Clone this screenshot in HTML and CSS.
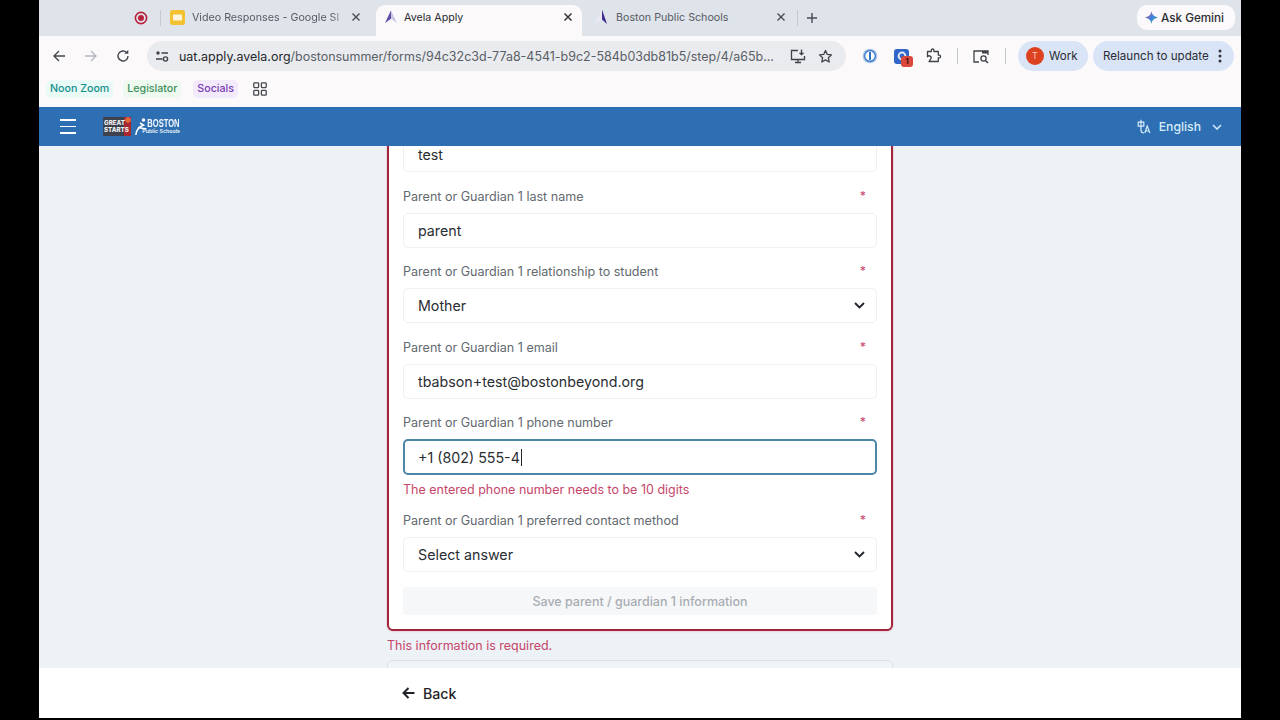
FILE: index.html
```html
<!DOCTYPE html>
<html lang="en">
<head>
<meta charset="utf-8">
<title>Avela Apply</title>
<link rel="stylesheet" href="styles.css">
</head>
<body>
<div class="window">
  <div class="tabstrip">
    <svg class="rec" width="14" height="14" viewBox="0 0 14 14"><circle cx="7" cy="7" r="5.6" fill="none" stroke="#b8213a" stroke-width="1.6"/><circle cx="7" cy="7" r="3" fill="#b8213a"/></svg>
    <span class="vsep rec-sep"></span>
    <div class="tab tab-slides">
      <svg class="fav" width="15" height="15" viewBox="0 0 15 15"><rect width="15" height="15" rx="2.5" fill="#f2c230"/><rect x="3" y="4.5" width="9" height="6" rx=".6" fill="#fdf6dd"/></svg>
      <span class="tab-title fade">Video Responses - Google Sl</span>
      <svg class="tab-x" width="10" height="10" viewBox="0 0 10 10"><path d="M1.5 1.5l7 7M8.5 1.5l-7 7" stroke="#474c55" stroke-width="1.4"/></svg>
    </div>
    <div class="tab tab-active">
      <svg class="fav" width="14" height="14" viewBox="0 0 14 14"><path d="M7 .5L1 13l6-4.200z" fill="#5b4aa8"/><path d="M7 .5L13 13 7 8.800z" fill="#c9c7e4"/></svg>
      <span class="tab-title dark">Avela Apply</span>
      <svg class="tab-x" width="10" height="10" viewBox="0 0 10 10"><path d="M1.5 1.5l7 7M8.5 1.5l-7 7" stroke="#33363c" stroke-width="1.5"/></svg>
    </div>
    <div class="tab tab-boston">
      <svg class="fav" width="16" height="16" viewBox="0 0 16 16"><path d="M9 .5L1.500 15 9 10.500z" fill="#e9e7f3"/><path d="M9 .5L14 15 9 10.500z" fill="#3d2a8c"/></svg>
      <span class="tab-title wide">Boston Public Schools</span>
      <svg class="tab-x" width="10" height="10" viewBox="0 0 10 10"><path d="M1.5 1.5l7 7M8.5 1.5l-7 7" stroke="#474c55" stroke-width="1.4"/></svg>
    </div>
    <span class="vsep"></span>
    <svg class="plus" width="10" height="10" viewBox="0 0 10 10"><path d="M5 0v10M0 5h10" stroke="#474c55" stroke-width="1.4"/></svg>
    <div class="gemini">
      <svg width="13" height="13" viewBox="0 0 14 14"><defs><linearGradient id="gem" x1="0" y1="0" x2="1" y2="1"><stop offset="0" stop-color="#e8593f"/><stop offset=".5" stop-color="#3f7fe8"/><stop offset="1" stop-color="#3fb56a"/></linearGradient></defs><path d="M7 0c.6 3.900 2.600 6 7 7-4.400 1-6.400 3.100-7 7-.6-3.900-2.600-6-7-7 4.400-1 6.400-3.100 7-7z" fill="url(#gem)"/></svg>
      <span>Ask Gemini</span>
    </div>
  </div>

  <div class="toolbar">
    <svg class="nav nav-back" width="14" height="14" viewBox="0 0 14 14"><path d="M13 7H2M7 2L2 7l5 5" fill="none" stroke="#44474d" stroke-width="1.4"/></svg>
    <svg class="nav nav-fwd" width="14" height="14" viewBox="0 0 14 14"><path d="M1 7h11M7 2l5 5-5 5" fill="none" stroke="#b4b7bd" stroke-width="1.4"/></svg>
    <svg class="nav nav-reload" width="14" height="14" viewBox="0 0 14 14"><path d="M12 7a5 5 0 1 1-1.500-3.600" fill="none" stroke="#44474d" stroke-width="1.400"/><path d="M12.300 .8v4h-4z" fill="#44474d"/></svg>
    <div class="omnibox">
      <span class="tune"><svg width="14" height="12" viewBox="0 0 14 12"><circle cx="3" cy="3" r="1.700" fill="#3f4248"/><path d="M6.500 3H13M1 9h6.500" stroke="#3f4248" stroke-width="1.500"/><circle cx="10.500" cy="9" r="2.100" fill="none" stroke="#3f4248" stroke-width="1.400"/></svg></span>
      <span class="url"><span class="host">uat.apply.avela.org</span>/bostonsummer/forms/94c32c3d-77a8-4541-b9c2-584b03db81b5/step/4/a65b...</span>
      <svg class="omni-ico install" width="16" height="15" viewBox="0 0 16 15"><path d="M8 1.500H1.500v9h13V7M5 13.500h6M8 10.500v3" fill="none" stroke="#3f4248" stroke-width="1.300"/><path d="M11.500 .5v5M9.500 3.700l2 2 2-2" fill="none" stroke="#3f4248" stroke-width="1.300"/></svg>
      <svg class="omni-ico star" width="15" height="15" viewBox="0 0 15 15"><path d="M7.500 1.500l1.800 3.900 4.200.5-3.100 2.900.8 4.200-3.700-2.100-3.700 2.100.8-4.200L1.500 5.900l4.200-.5z" fill="none" stroke="#3f4248" stroke-width="1.300" stroke-linejoin="round"/></svg>
    </div>
    <svg class="ext ext-1p" width="16" height="16" viewBox="0 0 16 16"><circle cx="8" cy="8" r="7.300" fill="#9fc3ea"/><circle cx="8" cy="8" r="5.300" fill="#fff" stroke="#2f6fc4" stroke-width="1.200"/><rect x="7" y="3.800" width="2" height="8.400" rx=".8" fill="#2f6fc4"/></svg>
    <div class="ext ext-gear">
      <svg width="15" height="15" viewBox="0 0 15 15"><rect width="15" height="15" rx="3" fill="#2f66c8"/><circle cx="8" cy="7" r="3.400" fill="none" stroke="#dfe9fa" stroke-width="2"/></svg>
      <span class="badge">1</span>
    </div>
    <svg class="ext ext-puzzle" width="16" height="16" viewBox="0 0 16 16"><path d="M1.500 3.500h3.800V2.300a1.300 1.300 0 0 1 2.600 0v1.200h4.400v3.700h1a1.300 1.300 0 0 1 0 2.600h-1v3.700H3l1.800-2.700a1.900 1.900 0 0 0-3.300-2z" fill="none" stroke="#3f4248" stroke-width="1.300" stroke-linejoin="round"/></svg>
    <span class="vsep tool-sep-a"></span>
    <svg class="ext ext-read" width="16" height="15" viewBox="0 0 16 15"><path d="M6 13H1V2h14v4" fill="none" stroke="#3f4248" stroke-width="1.300"/><rect x="9" y="2" width="6" height="2.500" fill="#3f4248"/><circle cx="10.500" cy="9.500" r="2.600" fill="none" stroke="#3f4248" stroke-width="1.300"/><path d="M12.500 11.500l2.500 2.500" stroke="#3f4248" stroke-width="1.500"/></svg>
    <span class="vsep tool-sep-b"></span>
    <div class="pill pill-work"><span class="avatar">T</span><span>Work</span></div>
    <div class="pill pill-relaunch"><span>Relaunch to update</span><svg width="4" height="14" viewBox="0 0 4 14"><circle cx="2" cy="2" r="1.500" fill="#33363c"/><circle cx="2" cy="7" r="1.500" fill="#33363c"/><circle cx="2" cy="12" r="1.500" fill="#33363c"/></svg></div>
  </div>

  <div class="bookmarks">
    <span class="chip chip-teal">Noon Zoom</span>
    <span class="chip chip-green">Legislator</span>
    <span class="chip chip-purple">Socials</span>
    <svg class="apps" width="14" height="14" viewBox="0 0 14 14"><g fill="none" stroke="#44474d" stroke-width="1.300"><rect x=".8" y=".8" width="4.800" height="4.800" rx=".8"/><rect x="8.400" y=".8" width="4.800" height="4.800" rx=".8"/><rect x=".8" y="8.400" width="4.800" height="4.800" rx=".8"/><rect x="8.400" y="8.400" width="4.800" height="4.800" rx=".8"/></g></svg>
  </div>

  <header class="appbar">
    <div class="burger"><i></i><i></i><i></i></div>
    <div class="logo">
      <div class="great"><span>GREAT</span><span>STARTS</span></div>
      <svg class="runner" width="12" height="17" viewBox="0 0 12 17"><circle cx="8.500" cy="2" r="1.700" fill="#fff"/><path d="M.8 17c.4-5 2.500-8 7.700-10L5 5M3 9.500l8.500 1.500" fill="none" stroke="#fff" stroke-width="1.500"/></svg>
      <div class="bps"><span class="bps-a">BOSTON</span><span class="bps-b">Public Schools</span></div>
    </div>
    <div class="lang">
      <svg width="14" height="16" viewBox="0 0 14 16"><g fill="none" stroke="#d6ecfa" stroke-width="1.200"><path d="M4 .8v2.400M1.200 3.200h5.600v4H1.200zM4 3.200v8M4 11c0 2 1 3 3 3"/><path d="M7.800 14l2.400-7 2.600 7M8.700 12h3.200"/></g></svg>
      <span>English</span>
      <svg class="lang-chev" width="10" height="6" viewBox="0 0 10 6"><path d="M1 1l4 4 4-4" fill="none" stroke="#d6ecfa" stroke-width="1.500"/></svg>
    </div>
  </header>

  <main class="content">
    <section class="card">
      <div class="field first"><div class="control"><span>test</span></div></div>
      <div class="field">
        <div class="label"><span>Parent or Guardian 1 last name</span><b>*</b></div>
        <div class="control"><span>parent</span></div>
      </div>
      <div class="field">
        <div class="label"><span>Parent or Guardian 1 relationship to student</span><b>*</b></div>
        <div class="control"><span>Mother</span><svg class="chev" width="11" height="7" viewBox="0 0 11 7"><path d="M1 1l4.500 4.500L10 1" fill="none" stroke="#1f2328" stroke-width="1.800"/></svg></div>
      </div>
      <div class="field">
        <div class="label"><span>Parent or Guardian 1 email</span><b>*</b></div>
        <div class="control"><span>tbabson+test@bostonbeyond.org</span></div>
      </div>
      <div class="field">
        <div class="label"><span>Parent or Guardian 1 phone number</span><b>*</b></div>
        <div class="control focus"><span class="typed">+1 (802) 555-4</span></div>
        <div class="error inner">The entered phone number needs to be 10 digits</div>
      </div>
      <div class="field">
        <div class="label"><span>Parent or Guardian 1 preferred contact method</span><b>*</b></div>
        <div class="control"><span>Select answer</span><svg class="chev" width="11" height="7" viewBox="0 0 11 7"><path d="M1 1l4.500 4.500L10 1" fill="none" stroke="#1f2328" stroke-width="1.800"/></svg></div>
      </div>
      <div class="save">Save parent / guardian 1 information</div>
    </section>
    <div class="error outer">This information is required.</div>
    <div class="next-card"></div>
  </main>

  <footer class="footer">
    <div class="back">
      <svg width="13" height="12" viewBox="0 0 13 12"><path d="M12.500 6H2M6.500 1L1.500 6l5 5" fill="none" stroke="#1f2328" stroke-width="2"/></svg>
      <span>Back</span>
    </div>
  </footer>
</div>
</body>
</html>
```
FILE: styles.css
```css
* { box-sizing: border-box; }
html, body { margin: 0; height: 100%; background: #000; }
body { font-family: Inter, "Liberation Sans", sans-serif; overflow: hidden; }
.window { width: 1202px; height: 718px; margin: 0 auto; display: flex; flex-direction: column; background: #fff; }

/* tab strip */
.tabstrip { height: 36px; flex: none; background: #dfe3ea; display: flex; align-items: center; padding-bottom: 1px; font-size: 10.7px; color: #565b64; }
.rec { margin-left: 95px; flex: none; }
.vsep { width: 1px; height: 16px; background: #c4c8cf; flex: none; }
.rec-sep { margin-left: 12px; }
.tab { display: flex; align-items: center; height: 31px; margin-top: 5px; margin-bottom: -1px; padding-bottom: 7px; flex: none; }
.tab-slides { width: 215px; padding-left: 9px; }
.fav { flex: none; }
.tab-title { margin-left: 7px; white-space: nowrap; overflow: hidden; }
.fade { width: 157px; -webkit-mask-image: linear-gradient(90deg, #000 88%, transparent); mask-image: linear-gradient(90deg, #000 88%, transparent); }
.tab-slides .tab-x { margin-left: 2px; }
.tab-active { width: 206px; background: #fcf9fb; border-radius: 9px 9px 0 0; padding-left: 8px; }
.dark { color: #2a2d33; width: 159px; margin-left: 6px; }
.tab-boston { width: 215px; padding-left: 11px; }
.wide { width: 160px; margin-left: 7px; }
.tab-x { flex: none; }
.plus { margin-left: 9px; flex: none; }
.gemini { margin-left: auto; margin-right: 6px; width: 98px; height: 25px; padding-right: 3px; background: #fbf9fb; border-radius: 10px; display: flex; align-items: center; justify-content: center; gap: 3px; font-size: 11.7px; font-weight: 500; color: #2a2d33; }

/* toolbar */
.toolbar { height: 40px; flex: none; background: #fcf9fb; display: flex; align-items: center; }
.nav { flex: none; }
.nav-back { margin-left: 13px; }
.nav-fwd { margin-left: 18px; }
.nav-reload { margin-left: 18px; }
.omnibox { margin-left: 17px; width: 699px; height: 30px; background: #e9ebee; border-radius: 15px; display: flex; align-items: center; flex: none; }
.tune { width: 28px; height: 24px; margin-left: 1px; display: flex; align-items: center; justify-content: center; flex: none; }
.url { margin-left: 3px; width: 596px; font-size: 12.47px; color: #5a5e66; white-space: nowrap; overflow: hidden; flex: none; }
.host { color: #24272c; }
.omni-ico { flex: none; }
.install { margin-left: 15px; }
.star { margin-left: 12px; }
.ext { flex: none; }
.ext-1p { margin-left: 16px; }
.ext-gear { margin-left: 16px; position: relative; width: 15px; height: 15px; display: flex; }
.badge { position: absolute; left: 7px; top: 7px; width: 12px; height: 11px; border-radius: 3px; background: #d9483b; color: #40100c; font-size: 8px; font-weight: 700; line-height: 11px; text-align: center; }
.ext-puzzle { margin-left: 17px; }
.tool-sep-a { margin-left: 15px; }
.ext-read { margin-left: 15px; }
.tool-sep-b { margin-left: 16px; }
.pill { height: 30px; border-radius: 15px; background: #d9e4f7; display: flex; align-items: center; font-size: 12px; color: #2a2d33; flex: none; }
.pill-work { margin-left: 12px; width: 70px; padding-left: 8px; gap: 5px; font-size: 11.6px; }
.avatar { width: 18px; height: 18px; border-radius: 50%; background: #dc4220; color: #f7c9b8; font-size: 9px; text-align: center; line-height: 18px; flex: none; }
.pill-relaunch { margin-left: 5px; width: 141px; padding-left: 10px; gap: 9px; font-size: 11.6px; }

/* bookmarks */
.bookmarks { height: 31px; flex: none; background: #fcf9fb; display: flex; align-items: center; padding-bottom: 6px; font-size: 10.65px; font-weight: 500; }
.chip { height: 18px; line-height: 18px; border-radius: 5px; padding: 0 4px; flex: none; }
.chip-teal { margin-left: 7px; background: #eafaf7; color: #14908c; }
.chip-green { margin-left: 10px; background: #eef9ef; color: #3f8f5a; }
.chip-purple { margin-left: 12px; background: #f3ebfc; color: #7a3db4; }
.apps { margin-left: 15px; flex: none; }

/* app bar */
.appbar { height: 39px; flex: none; background: #2d6fb2; display: flex; align-items: center; position: relative; z-index: 1; }
.burger { margin-left: 21px; width: 16px; display: flex; flex-direction: column; gap: 5px; flex: none; }
.burger i { display: block; height: 1.500px; background: #fff; }
.logo { margin-left: 27px; display: flex; align-items: center; flex: none; }
.great { width: 28px; height: 19px; background: radial-gradient(circle at 25px 3px, #e2683d 2.500px, transparent 3px), linear-gradient(90deg, #3d424e 76%, #a8282f 76%); display: flex; flex-direction: column; justify-content: center; font-size: 6.200px; line-height: 6.500px; font-weight: 800; color: #f2f2f2; padding-left: 1px; }
.runner { margin-left: 4px; flex: none; }
.bps { margin-left: 1px; width: 32px; display: flex; flex-direction: column; align-items: flex-end; white-space: nowrap; color: #f3f8fc; }
.bps-a { font-family: "Liberation Sans", sans-serif; font-size: 10px; line-height: 9px; font-weight: 700; transform: scaleX(.76); transform-origin: right center; }
.bps-b { font-size: 5.300px; line-height: 6px; font-weight: 600; }
.lang { margin-left: auto; margin-right: 19px; display: flex; align-items: center; color: #d6ecfa; font-size: 12.2px; font-weight: 500; flex: none; }
.lang span { margin-left: 8px; }
.lang-chev { margin-left: 11px; }

/* content */
.content { flex: 1; min-height: 0; background: #edf2f6; overflow: hidden; display: flex; flex-direction: column; align-items: center; }
.card { width: 506px; margin-top: -12px; margin-left: -1px; margin-right: -1px; flex: none; background: #fff; border: 2px solid #a3243d; border-radius: 6px; padding: 1px 14px 14px; box-shadow: 0 0 2px rgba(220, 60, 90, .45); }
.field { margin-top: 13.600px; }
.field.first { margin-top: 0; }
.label { height: 20px; margin-bottom: 7px; display: flex; justify-content: space-between; font-size: 12.550px; line-height: 22px; color: #62696f; }
.label b { color: #cc5078; font-weight: 500; font-size: 12px; margin-right: 11px; line-height: 20px; }
.control { height: 35px; border: 1px solid #eef0f3; border-radius: 5px; background: #fff; padding: 0 14px; display: flex; align-items: center; justify-content: space-between; font-size: 14.250px; color: #2a2e33; }
.control.focus { height: 36px; border: 2px solid #4c86a8; padding: 0 13px; }
.typed { border-right: 1px solid #23272c; padding-right: 1px; line-height: 17px; }
.chev { flex: none; margin-right: -3px; }
.error { color: #c5466a; font-size: 12.500px; line-height: 18px; }
.error.inner { margin-top: 5px; margin-bottom: -3.500px; line-height: 20px; }
.save { margin-top: 15px; height: 28px; border-radius: 4px; background: #f5f7f8; color: #a8adb4; font-size: 12.500px; font-weight: 500; display: flex; align-items: center; justify-content: center; }
.error.outer { width: 506px; flex: none; margin-top: 6px; }
.next-card { width: 506px; height: 30px; flex: none; margin-top: 5px; background: #f1f4f7; border: 1px solid #dde1e6; border-radius: 6px 6px 0 0; }

/* footer */
.footer { height: 50px; flex: none; background: #fff; display: flex; align-items: center; }
.back { margin-left: 363px; display: flex; align-items: center; gap: 8px; font-size: 14.200px; font-weight: 500; color: #1f2328; }
```
